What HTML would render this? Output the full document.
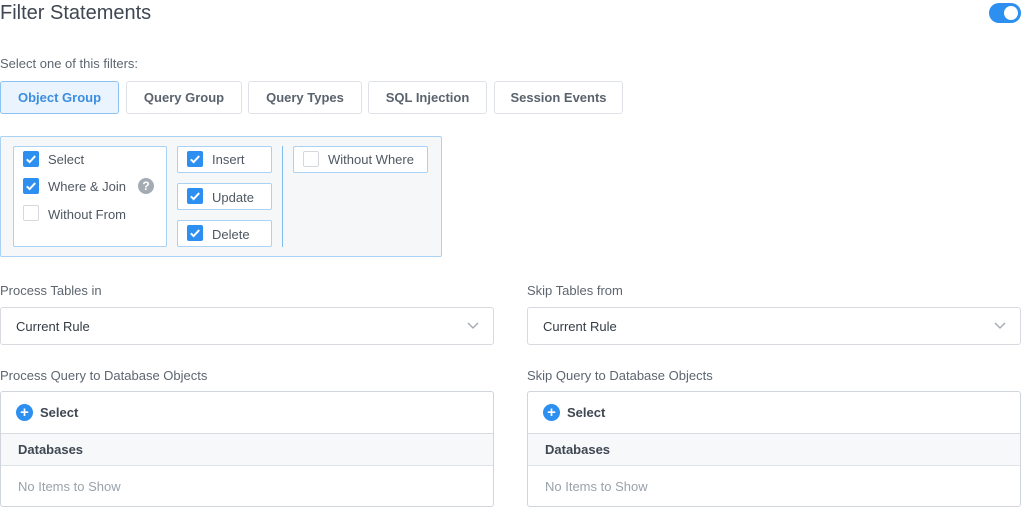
<!DOCTYPE html>
<html><head><meta charset="utf-8"><style>
*{box-sizing:border-box;margin:0;padding:0}
body{width:1024px;height:511px;background:#fff;font-family:"Liberation Sans",sans-serif;color:#4a5360;position:relative;overflow:hidden;font-size:13px}
.a{position:absolute}
.title{left:0;top:2px;font-size:20px;color:#3f4752}
.lbl{color:#5d6670;font-size:13px}
.tab{top:81px;height:33px;border:1px solid #dfe3e8;border-radius:3px;background:#fff;font-weight:bold;color:#5a636d;font-size:13px;display:flex;align-items:center;justify-content:center}
.tab.on{background:#eaf4fe;border-color:#8cc2f2;color:#3b8de0}
.box{border:1px solid #a9d2f5;border-radius:2px}
.cb{width:16px;height:16px;border-radius:2px;background:#2d8ff0;display:flex;align-items:center;justify-content:center}
.cb.off{background:#fff;border:1px solid #d5d9de}
.t{font-size:13px;color:#4f5862}
.sel{height:38px;border:1px solid #d7dbe0;border-radius:3px;padding-left:15px;display:flex;align-items:center;color:#333b44;font-size:13px}
.pan{border:1px solid #d0d5db;border-radius:3px;overflow:hidden}
</style></head><body>
<div class="a title">Filter Statements</div>
<div class="a" style="left:989px;top:3px;width:32px;height:20px;border-radius:10px;background:#2d8ff0"><div style="position:absolute;right:3px;top:3px;width:14px;height:14px;border-radius:50%;background:#fff"></div></div>
<div class="a lbl" style="left:0;top:56px">Select one of this filters:</div>
<div class="a tab on" style="left:0;width:119px">Object Group</div>
<div class="a tab" style="left:126px;width:116px">Query Group</div>
<div class="a tab" style="left:248px;width:114px">Query Types</div>
<div class="a tab" style="left:368px;width:119px">SQL Injection</div>
<div class="a tab" style="left:494px;width:129px">Session Events</div>

<div class="a box" style="left:0;top:136px;width:442px;height:121px;background:#f5f7f9"></div>
<div class="a box" style="left:13px;top:146px;width:154px;height:101px;background:#fff"></div>
<div class="a box" style="left:177px;top:146px;width:95px;height:27px;background:#fff"></div>
<div class="a box" style="left:177px;top:183px;width:95px;height:27px;background:#fff"></div>
<div class="a box" style="left:177px;top:220px;width:95px;height:27px;background:#fff"></div>
<div class="a" style="left:282px;top:146px;width:1px;height:101px;background:#7fbdf0"></div>
<div class="a box" style="left:293px;top:146px;width:135px;height:27px;background:#fff"></div>

<svg width="0" height="0" style="position:absolute"><defs><symbol id="ck" viewBox="0 0 16 16"><path d="M3.8 8.3l2.8 2.8 5.6-6" stroke="#fff" stroke-width="2" fill="none"/></symbol></defs></svg>
<div class="a cb" style="left:23px;top:151px"><svg width="16" height="16"><use href="#ck"/></svg></div>
<div class="a t" style="left:48px;top:152px">Select</div>
<div class="a cb" style="left:23px;top:178px"><svg width="16" height="16"><use href="#ck"/></svg></div>
<div class="a t" style="left:48px;top:179px">Where &amp; Join</div>
<div class="a" style="left:138px;top:178px;width:16px;height:16px;border-radius:50%;background:#a4abb3;color:#fff;font-size:12px;font-weight:bold;text-align:center;line-height:16px">?</div>
<div class="a cb off" style="left:23px;top:205px"></div>
<div class="a t" style="left:48px;top:207px">Without From</div>
<div class="a cb" style="left:187px;top:151px"><svg width="16" height="16"><use href="#ck"/></svg></div>
<div class="a t" style="left:212px;top:152px">Insert</div>
<div class="a cb" style="left:187px;top:188px"><svg width="16" height="16"><use href="#ck"/></svg></div>
<div class="a t" style="left:212px;top:190px">Update</div>
<div class="a cb" style="left:187px;top:225px"><svg width="16" height="16"><use href="#ck"/></svg></div>
<div class="a t" style="left:212px;top:227px">Delete</div>
<div class="a cb off" style="left:303px;top:151px"></div>
<div class="a t" style="left:328px;top:152px">Without Where</div>

<div class="a lbl" style="left:0;top:283px">Process Tables in</div>
<div class="a lbl" style="left:527px;top:283px">Skip Tables from</div>
<div class="a sel" style="left:0;top:307px;width:494px">Current Rule</div>
<div class="a sel" style="left:527px;top:307px;width:494px">Current Rule</div>
<svg class="a" style="left:467px;top:322px" width="12" height="8"><path d="M1 1l5 5 5-5" stroke="#a0a7ae" stroke-width="1.3" fill="none"/></svg>
<svg class="a" style="left:994px;top:322px" width="12" height="8"><path d="M1 1l5 5 5-5" stroke="#a0a7ae" stroke-width="1.3" fill="none"/></svg>

<div class="a lbl" style="left:0;top:368px">Process Query to Database Objects</div>
<div class="a lbl" style="left:527px;top:368px">Skip Query to Database Objects</div>

<div class="a pan" style="left:0;top:391px;width:494px;height:116px">
 <div style="height:42px;border-bottom:1px solid #d7dce1;display:flex;align-items:center;padding-left:15px;font-weight:bold;color:#3f4752"><span style="width:17px;height:17px;border-radius:50%;background:#2d8ff0;color:#fff;font-size:15px;line-height:17px;text-align:center;margin-right:7px">+</span>Select</div>
 <div style="height:32px;border-bottom:1px solid #dfe3e7;background:#f6f8fa;display:flex;align-items:center;padding-left:17px;font-weight:bold;color:#3f4752">Databases</div>
 <div style="height:40px;display:flex;align-items:center;padding-left:17px;color:#9aa2aa">No Items to Show</div>
</div>
<div class="a pan" style="left:527px;top:391px;width:494px;height:116px">
 <div style="height:42px;border-bottom:1px solid #d7dce1;display:flex;align-items:center;padding-left:15px;font-weight:bold;color:#3f4752"><span style="width:17px;height:17px;border-radius:50%;background:#2d8ff0;color:#fff;font-size:15px;line-height:17px;text-align:center;margin-right:7px">+</span>Select</div>
 <div style="height:32px;border-bottom:1px solid #dfe3e7;background:#f6f8fa;display:flex;align-items:center;padding-left:17px;font-weight:bold;color:#3f4752">Databases</div>
 <div style="height:40px;display:flex;align-items:center;padding-left:17px;color:#9aa2aa">No Items to Show</div>
</div>
</body></html>
